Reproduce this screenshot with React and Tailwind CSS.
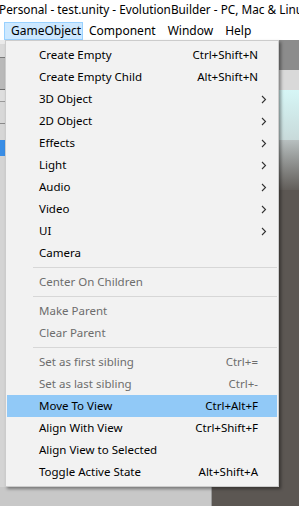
import React from "react";

const items = [
  { label: "Create Empty", sc: "Ctrl+Shift+N" },
  { label: "Create Empty Child", sc: "Alt+Shift+N" },
  { label: "3D Object", sub: true },
  { label: "2D Object", sub: true },
  { label: "Effects", sub: true },
  { label: "Light", sub: true },
  { label: "Audio", sub: true },
  { label: "Video", sub: true },
  { label: "UI", sub: true },
  { label: "Camera" },
  { sep: true },
  { label: "Center On Children", dis: true },
  { sep: true },
  { label: "Make Parent", dis: true },
  { label: "Clear Parent", dis: true },
  { sep: true },
  { label: "Set as first sibling", sc: "Ctrl+=", dis: true },
  { label: "Set as last sibling", sc: "Ctrl+-", dis: true },
  { label: "Move To View", sc: "Ctrl+Alt+F", hi: true },
  { label: "Align With View", sc: "Ctrl+Shift+F" },
  { label: "Align View to Selected" },
  { label: "Toggle Active State", sc: "Alt+Shift+A" },
];

function Chevron() {
  return (
    <svg width="6" height="9" viewBox="0 0 6 9" className="block">
      <path d="M1 1 L4.5 4.5 L1 8" fill="none" stroke="#333" strokeWidth="1.1" />
    </svg>
  );
}

export default function App() {
  return (
    <div className="relative w-[299px] h-[506px] overflow-hidden bg-white font-['Noto_Sans',sans-serif] text-[11.5px] text-black flex flex-col">
      {/* title bar */}
      <div className="h-[20px] flex items-center whitespace-nowrap overflow-hidden -ml-[1px] text-[11.8px]">
        <span className="leading-none">Personal - test.unity - EvolutionBuilder - PC, Mac &amp; Linux Standalone</span>
      </div>
      {/* menu bar */}
      <div className="h-[20px] flex items-end whitespace-nowrap text-[12px]">
        <div className="ml-[4px] h-[18px] w-[79px] flex items-center pl-[6px] bg-[#cce8ff] border border-[#99d1ff]">GameObject</div>
        <div className="ml-[6px] h-[18px] flex items-center">Component</div>
        <div className="ml-[12px] h-[18px] flex items-center">Window</div>
        <div className="ml-[12px] h-[18px] flex items-center">Help</div>
      </div>
      {/* editor body */}
      <div className="flex-1 flex">
        <div className="w-[212px] flex flex-col bg-[#c8c8c8] border-r border-[#9a9a9a]">
          <div className="h-[4px] bg-[#eaeaea]" />
          <div className="h-[14px] bg-[#d9d9d9] border-b border-[#7a7a7a]" />
          <div className="h-[32px] bg-[#b9b9b9] border-b border-[#6e6e6e]" />
          <div className="h-[12px] bg-[#dedede] border-b border-[#9a9a9a]" />
          <div className="h-[22px] bg-[#d8d8d8] border-b border-[#8a8a8a]" />
          <div className="h-[16px] bg-[#d6d6d6]" />
          <div className="h-[16px] bg-[#3a8ee6]" />
          <div className="flex-1 bg-[#d4d4d4]" />
          <div className="h-[19px] bg-[#c8c8c8]" />
        </div>
        <div className="flex-1 flex flex-col bg-[#5c5753]">
          <div className="h-[30px] bg-[#8c8c8c]" />
          <div className="h-[20px] bg-[#d9d9d9]" />
          <div className="h-[50px] bg-gradient-to-b from-[#d6f6f6] to-[#c8dada]" />
          <div className="h-[50px] bg-gradient-to-b from-[#b8c0c0] to-[#625e5a]" />
          <div className="flex-1 bg-[#5c5753]" />
        </div>
      </div>

      {/* dropdown menu */}
      <div className="absolute left-[5px] top-[40px] w-[274px] bg-[#f2f2f2] border border-[#cccccc] shadow-[2px_2px_3px_rgba(0,0,0,0.4)] py-[3px] px-[1px]">
        {items.map((it, i) =>
          it.sep ? (
            <div key={i} className="h-[7px] flex items-center pl-[26px]">
              <div className="h-px w-full bg-[#d7d7d7]" />
            </div>
          ) : (
            <div
              key={i}
              className={
                "h-[22px] flex items-center whitespace-nowrap " +
                (it.hi ? "bg-[#91c9f7] " : "") +
                (it.dis ? "text-[#6d6d6d]" : "text-black")
              }
            >
              <span className="pl-[32px] flex-1">{it.label}</span>
              {it.sc && <span className="pr-[19px]">{it.sc}</span>}
              {it.sub && (
                <span className="pr-[10px]">
                  <Chevron />
                </span>
              )}
            </div>
          )
        )}
      </div>
    </div>
  );
}
